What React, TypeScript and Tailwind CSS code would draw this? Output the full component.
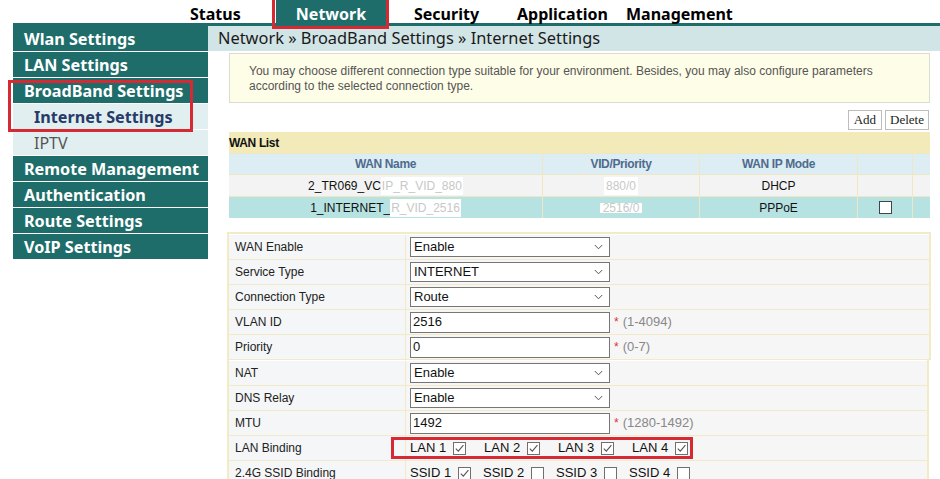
import React from "react";

const TEAL = "bg-[#1f6d6a]";

function Check({ checked }: { checked: boolean }) {
  return (
    <span className="inline-flex w-[13px] h-[13px] border border-[#6f6f6f] bg-white items-center justify-center shrink-0">
      {checked && (
        <svg width="11" height="11" viewBox="0 0 11 11">
          <path d="M1.8 5.6 L4.3 8.2 L9.4 2.2" fill="none" stroke="#555" strokeWidth="1.1" />
        </svg>
      )}
    </span>
  );
}

function Select({ value }: { value: string }) {
  return (
    <div className="w-[200px] h-[20px] border border-[#767676] bg-white flex items-center justify-between pl-[3px] pr-[6px] text-[13px] text-[#111]">
      <span>{value}</span>
      <svg width="9" height="6" viewBox="0 0 9 6">
        <path d="M0.8 1 L4.5 4.8 L8.2 1" fill="none" stroke="#555" strokeWidth="1" />
      </svg>
    </div>
  );
}

function Input({ value, hint }: { value: string; hint: string }) {
  return (
    <div className="flex items-center">
      <div className="w-[200px] h-[21px] border border-[#767676] bg-white flex items-center pl-[2px] text-[13px] text-[#111]">
        {value}
      </div>
      <span className="ml-[4px] text-[#e0303a] text-[12px]">*</span>
      <span className="ml-[4px] text-[#888] text-[13px]">{hint}</span>
    </div>
  );
}

function Row({ label, children }: { label: string; children: React.ReactNode }) {
  return (
    <div className="grid grid-cols-[177px_1fr] h-[25px] border-b border-[#f1e9c8] bg-[#f6f6f6]">
      <div className="flex items-center pl-[6px] text-[12px] text-[#222] border-r border-[#f1e9c8] bg-[#f5f6f7]">
        {label}
      </div>
      <div className="flex items-center pl-[4px]">{children}</div>
    </div>
  );
}

export default function App() {
  const sideTop = ["Wlan Settings", "LAN Settings", "BroadBand Settings"];
  const sideBottom = ["Remote Management", "Authentication", "Route Settings", "VoIP Settings"];
  const sans = { fontFamily: '"Noto Sans", "Open Sans", sans-serif' };
  return (
    <div
      className="relative w-[940px] h-[479px] overflow-hidden bg-white text-[#222]"
      style={{ fontFamily: '"Liberation Sans", Arial, sans-serif' }}
    >
      {/* top nav */}
      <div className="flex h-[23px] items-stretch text-[16px] font-bold text-black" style={sans}>
        <div className="w-[190px]" />
        <div className="w-[86px] flex items-center leading-none pt-[4px]">Status</div>
        <div className={`w-[110px] ${TEAL} text-white flex items-center justify-center leading-none pt-[4px]`}>Network</div>
        <div className="w-[28px]" />
        <div className="w-[103px] flex items-center leading-none pt-[4px]">Security</div>
        <div className="w-[109px] flex items-center leading-none pt-[4px]">Application</div>
        <div className="flex items-center leading-none pt-[4px]">Management</div>
      </div>
      <div className={`ml-[13px] h-[3px] ${TEAL}`} />

      <div className="flex">
        {/* sidebar */}
        <div className="ml-[13px] w-[195px] flex flex-col gap-[1px]" style={sans}>
          {sideTop.map((s) => (
            <div key={s} className={`h-[25px] ${TEAL} text-white font-bold text-[16.2px] flex items-center pl-[11px] leading-none pt-[1px]`}>
              {s}
            </div>
          ))}
          <div className="h-[25px] bg-[#e2eff0] text-[#273b69] font-bold text-[16.2px] flex items-center pl-[21px] leading-none pt-[1px]">
            Internet Settings
          </div>
          <div className="h-[25px] bg-[#e2eff0] text-[#555] text-[16px] flex items-center pl-[21px] leading-none pt-[1px]">
            IPTV
          </div>
          {sideBottom.map((s) => (
            <div key={s} className={`h-[25px] ${TEAL} text-white font-bold text-[16.2px] flex items-center pl-[11px] leading-none pt-[1px]`}>
              {s}
            </div>
          ))}
        </div>

        {/* content */}
        <div className="flex-1 flex flex-col">
          <div className="h-[25px] bg-[#d1e4e6] flex items-center pl-[10px] text-[16.4px] text-[#1a1a1a] leading-none" style={sans}>
            Network » BroadBand Settings » Internet Settings
          </div>

          <div className="mt-[2px] ml-[21px] mr-[10px] h-[50px] border border-[#dcdcd0] bg-[#fefde8] pl-[19px] pt-[10px] text-[12px] leading-[15px] text-[#555]">
            You may choose different connection type suitable for your environment. Besides, you may also configure parameters
            <br />
            according to the selected connection type.
          </div>

          <div className="mt-[7px] mr-[11px] flex justify-end gap-[3px]" style={{ fontFamily: '"Liberation Serif", serif' }}>
            <div className="h-[20px] px-[5px] border border-[#bdbdbd] bg-white text-[13px] flex items-center">Add</div>
            <div className="h-[20px] px-[4px] border border-[#bdbdbd] bg-white text-[13px] flex items-center">Delete</div>
          </div>

          {/* WAN list */}
          <div className="mt-[2px] ml-[21px] mr-[10px] flex flex-col">
            <div className="h-[21px] bg-[#f2eab9] flex items-center font-bold text-[12px] tracking-[-0.03em] text-[#111]">
              WAN List
            </div>
            <div className="grid grid-cols-[314px_157px_158px_55px_1fr] h-[21px] bg-[#dcedf4] border-t border-[#efe7c4] text-[12px] font-bold text-[#4f6b8c] tracking-[-0.03em]">
              <div className="flex items-center justify-center border-r border-[#efe7c4]">WAN Name</div>
              <div className="flex items-center justify-center border-r border-[#efe7c4]">VID/Priority</div>
              <div className="flex items-center justify-center border-r border-[#efe7c4]">WAN IP Mode</div>
              <div className="border-r border-[#efe7c4]" />
              <div />
            </div>
            <div className="grid grid-cols-[314px_157px_158px_55px_1fr] h-[22px] bg-[#f3f3f3] border-t border-[#efe7c4] text-[12px] text-[#111]">
              <div className="flex items-center justify-center border-r border-[#efe7c4]">
                <span>2_TR069_VC</span>
                <span className="bg-white text-[#c8c8c8] px-[1px]">IP_R_VID_880</span>
              </div>
              <div className="flex items-center justify-center border-r border-[#efe7c4]">
                <span className="bg-white text-[#c8c8c8] px-[2px]">880/0</span>
              </div>
              <div className="flex items-center justify-center border-r border-[#efe7c4]">DHCP</div>
              <div className="border-r border-[#efe7c4]" />
              <div />
            </div>
            <div className="grid grid-cols-[314px_157px_158px_55px_1fr] h-[22px] bg-[#b6e3e1] border-t border-[#efe7c4] text-[12px] text-[#111]">
              <div className="flex items-center justify-center border-r border-[#efe7c4]">
                <span>1_INTERNET_</span>
                <span className="bg-white text-[#c8c8c8] px-[1px]">R_VID_2516</span>
              </div>
              <div className="flex items-center justify-center border-r border-[#efe7c4]">
                <span className="bg-white text-[#c8c8c8] px-[3px] leading-[10px]">2516/0</span>
              </div>
              <div className="flex items-center justify-center border-r border-[#efe7c4]">PPPoE</div>
              <div className="flex items-center justify-center border-r border-[#efe7c4]">
                <span className="w-[13px] h-[13px] border border-[#444] bg-white" />
              </div>
              <div />
            </div>
          </div>

          {/* form table 1 */}
          <div className="mt-[14px] ml-[19px] mr-[9px] border-2 border-b-0 border-[#f3ebc6] pt-[1px]">
            <Row label="WAN Enable"><Select value="Enable" /></Row>
            <Row label="Service Type"><Select value="INTERNET" /></Row>
            <Row label="Connection Type"><Select value="Route" /></Row>
            <Row label="VLAN ID"><Input value="2516" hint="(1-4094)" /></Row>
            <Row label="Priority"><Input value="0" hint="(0-7)" /></Row>
          </div>
          {/* form table 2 */}
          <div className="ml-[19px] mr-[11px] border-2 border-t-0 border-[#f3ebc6] pt-[1px]">
            <Row label="NAT"><Select value="Enable" /></Row>
            <Row label="DNS Relay"><Select value="Enable" /></Row>
            <Row label="MTU"><Input value="1492" hint="(1280-1492)" /></Row>
            <Row label="LAN Binding">
              <div className="flex text-[13px] text-[#111]">
                {[1, 2, 3, 4].map((n) => (
                  <div key={n} className="w-[74px] flex items-center gap-[7px]">
                    <span>LAN {n}</span>
                    <Check checked />
                  </div>
                ))}
              </div>
            </Row>
            <Row label="2.4G SSID Binding">
              <div className="flex text-[13px] text-[#111]">
                {[1, 2, 3, 4].map((n) => (
                  <div key={n} className="w-[73px] flex items-center gap-[7px]">
                    <span>SSID {n}</span>
                    <Check checked={n === 1} />
                  </div>
                ))}
              </div>
            </Row>
          </div>
        </div>
      </div>

      {/* red annotation boxes */}
      <div className="absolute left-[272px] top-0 w-[117px] h-[29px] border-[3px] border-t-0 border-[#d52a33]" />
      <div className="absolute left-[8px] top-[80px] w-[185px] h-[52px] border-[3px] border-[#d52a33]" />
      <div className="absolute left-[391px] top-[437px] w-[302px] h-[22px] border-[3px] border-[#d52a33]" />
    </div>
  );
}
